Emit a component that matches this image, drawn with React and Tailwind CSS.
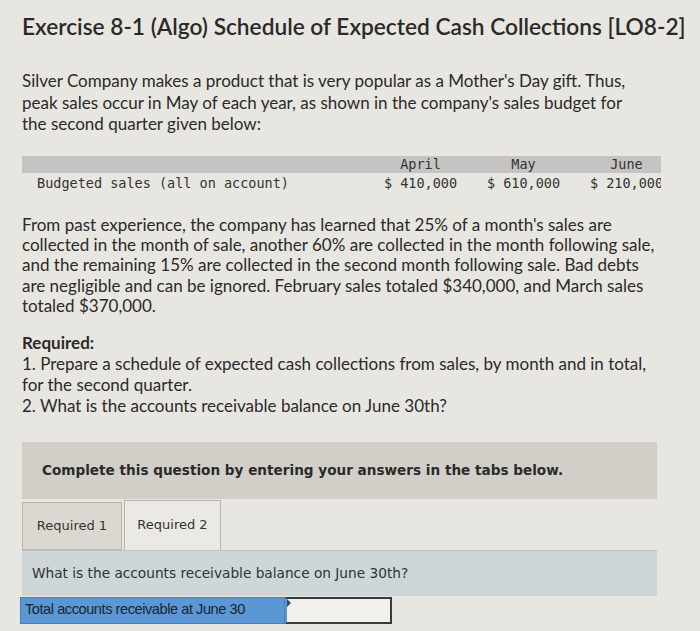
export default function App() {
  const body = { fontFamily: "Lato, 'Open Sans', sans-serif" };
  const mono = { fontFamily: "'DejaVu Sans Mono', monospace" };
  const ui = { fontFamily: "'DejaVu Sans', Verdana, sans-serif" };

  return (
    <div className="w-[700px] h-[631px] overflow-hidden bg-[#e8e6e1] text-[#2b2a29]">
      <div className="pl-[22px] pt-[12px]" style={body}>
        <h1 className="text-[22.7px] leading-[30px] font-semibold whitespace-nowrap">
          Exercise 8-1 (Algo) Schedule of Expected Cash Collections [LO8-2]
        </h1>

        <p className="mt-[28px] text-[17px] leading-[21.5px] whitespace-nowrap">
          <span className="block">Silver Company makes a product that is very popular as a Mother's Day gift. Thus,</span>
          <span className="block">peak sales occur in May of each year, as shown in the company's sales budget for</span>
          <span className="block">the second quarter given below:</span>
        </p>
      </div>

      {/* Sales budget table */}
      <div className="ml-[22px] mt-[21px] w-[639px] overflow-hidden text-[13.5px] leading-[17px] text-[#333]" style={mono}>
        <div className="grid grid-cols-[347px_103px_103px_103px] bg-[#c5c4c2] h-[17px] whitespace-nowrap">
          <div />
          <div className="text-center">April</div>
          <div className="text-center">May</div>
          <div className="text-center">June</div>
        </div>
        <div className="grid grid-cols-[347px_103px_103px_103px] h-[20px] leading-[20px] whitespace-nowrap">
          <div className="pl-[15px]">Budgeted sales (all on account)</div>
          <div className="text-center">$ 410,000</div>
          <div className="text-center">$ 610,000</div>
          <div className="text-center">$ 210,000</div>
        </div>
      </div>

      <div className="pl-[22px]" style={body}>
        <p className="mt-[22px] text-[17px] leading-[20.4px] whitespace-nowrap">
          <span className="block">From past experience, the company has learned that 25% of a month's sales are</span>
          <span className="block">collected in the month of sale, another 60% are collected in the month following sale,</span>
          <span className="block">and the remaining 15% are collected in the second month following sale. Bad debts</span>
          <span className="block">are negligible and can be ignored. February sales totaled $340,000, and March sales</span>
          <span className="block">totaled $370,000.</span>
        </p>

        <div className="mt-[15px] text-[17px] leading-[21px] whitespace-nowrap">
          <div className="font-bold">Required:</div>
          <div>1. Prepare a schedule of expected cash collections from sales, by month and in total,</div>
          <div>for the second quarter.</div>
          <div>2. What is the accounts receivable balance on June 30th?</div>
        </div>
      </div>

      {/* Instructions box */}
      <div className="ml-[22px] mt-[26px] w-[635px] h-[57px] bg-[#d2cfc9] flex items-center pl-[20px]" style={ui}>
        <span className="text-[13.6px] font-bold text-[#2a2a2a] whitespace-nowrap">
          Complete this question by entering your answers in the tabs below.
        </span>
      </div>

      {/* Tabs */}
      <div className="ml-[22px] mt-[1px] w-[635px] flex items-end" style={ui}>
        <div className="w-[100px] h-[48px] bg-[#dcd8d1] border border-[#b9b6b0] flex items-center justify-center text-[13px] text-[#333]">
          Required 1
        </div>
        <div className="ml-[2px] w-[97px] h-[50px] bg-[#ebe9e4] border border-b-0 border-[#b9b6b0] flex items-center justify-center text-[13px] text-[#333]">
          Required 2
        </div>
      </div>

      {/* Panel */}
      <div className="ml-[22px] w-[635px] h-[46px] bg-[#cdd7d9] border-t border-[#b9c3c5] flex items-center pl-[10px]" style={ui}>
        <span className="text-[13.7px] text-[#2f3335] whitespace-nowrap">
          What is the accounts receivable balance on June 30th?
        </span>
      </div>

      <div className="ml-[20px] mt-[1px] flex h-[27px]">
        <div
          className="w-[265px] bg-[#5a97d4] border border-[#4a7fb6] flex items-center pl-[4px] text-[14.6px] tracking-[-0.45px] text-[#1c2630] whitespace-nowrap"
          style={{ fontFamily: "'Liberation Sans', Arial, sans-serif" }}
        >
          Total accounts receivable at June 30
        </div>
        <div className="relative w-[107px] bg-[#f1f0ec] border-2 border-[#3a3a3a] border-l-[#5a97d4]">
          <div className="absolute left-0 top-0 w-0 h-0 border-t-[4px] border-b-[4px] border-l-[4px] border-t-transparent border-b-transparent border-l-[#2d4a6a]" />
        </div>
      </div>
    </div>
  );
}
